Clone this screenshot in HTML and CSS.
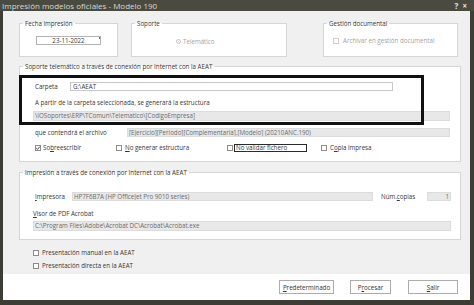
FILE: index.html
```html
<!DOCTYPE html>
<html lang="es">
<head>
<meta charset="utf-8">
<title>Impresión modelos oficiales - Modelo 190</title>
<link rel="stylesheet" href="styles.css">
</head>
<body>
<div class="window">
  <div class="titlebar">
    <span class="title">Impresión modelos oficiales - Modelo 190</span>
    <span class="tb-btns"><span class="tb-help">?</span><span class="tb-close">×</span></span>
  </div>
  <div class="client">
    <div class="main">
      <div class="toprow">
        <fieldset class="grp grp-fecha">
          <legend>Fecha impresión</legend>
          <div class="date-wrap">
            <div class="input date">23-11-2022</div>
            <span class="req"></span>
          </div>
        </fieldset>
        <fieldset class="grp grp-soporte">
          <legend>Soporte</legend>
          <div class="opt opt-radio disabled"><span class="radio"><span class="dot"></span></span>Telemático</div>
        </fieldset>
        <fieldset class="grp grp-gestion">
          <legend>Gestión documental</legend>
          <div class="opt opt-check disabled"><span class="box"></span>Archivar en gestión documental</div>
        </fieldset>
      </div>

      <fieldset class="grp grp-tele">
        <legend>Soporte telemático a través de conexión por Internet con la AEAT</legend>
        <div class="row row-carpeta"><span class="lbl lbl-carpeta">Carpeta</span><div class="input w-carpeta">G:\AEAT</div></div>
        <div class="note">A partir de la carpeta seleccionada, se generará la estructura</div>
        <div class="input ro w-ruta">\IOSoportes\ERP\TComun\Telematico\[CodigoEmpresa]</div>
        <div class="row row-archivo"><span class="lbl lbl-archivo">que contendrá el archivo</span><div class="input ro w-archivo">[Ejercicio][Periodo][Complementaria].[Modelo] (20210ANC.190)</div></div>
        <div class="checks">
          <div class="ck ck1"><span class="box"><svg viewBox="0 0 6 6" width="6" height="6"><path d="M1.2 3.1 L2.5 4.4 L4.9 1.6" fill="none" stroke="#333" stroke-width="0.9"/></svg></span><span>So<u>b</u>reescribir</span></div>
          <div class="ck ck2"><span class="box"></span><span><u>N</u>o generar estructura</span></div>
          <div class="ck ck3"><span class="box"></span><span class="focus">No <u>v</u>alidar fichero</span></div>
          <div class="ck ck4"><span class="box"></span><span>C<u>o</u>pia impresa</span></div>
        </div>
      </fieldset>

      <fieldset class="grp grp-imp">
        <legend>Impresión a través de conexión por Internet con la AEAT</legend>
        <div class="row row-imp"><span class="lbl lbl-imp"><u>I</u>mpresora</span><div class="input ro w-imp">HP7F6B7A (HP OfficeJet Pro 9010 series)</div><span class="lbl lbl-copias">Núm.<u>c</u>opias</span><div class="input ro w-copias">1</div></div>
        <div class="visor-lbl"><u>V</u>isor de PDF Acrobat</div>
        <div class="input ro w-visor">C:\Program Files\Adobe\Acrobat DC\Acrobat\Acrobat.exe</div>
      </fieldset>

      <div class="extra extra1"><span class="box"></span>Presentación manual en la AEAT</div>
      <div class="extra extra2"><span class="box"></span>Presentación directa en la AEAT</div>
    </div>
    <div class="footer">
      <div class="btn btn-pred"><span><u>P</u>redeterminado</span></div>
      <div class="btn btn-proc"><span>P<u>r</u>ocesar</span></div>
      <div class="btn btn-salir"><span><u>S</u>alir</span></div>
    </div>
  </div>
  <div class="annot"></div>
</div>
</body>
</html>
```

FILE: styles.css
```css
* { box-sizing: border-box; }
html, body { margin: 0; padding: 0; }
body {
  width: 474px;
  height: 305px;
  overflow: hidden;
  font-family: "Open Sans", "Noto Sans", sans-serif;
  font-size: 6.2px;
  color: #363636;
  background: #3f3f37;
}
u { text-decoration-thickness: 0.5px; text-underline-offset: 1px; }

.window {
  position: relative;
  width: 474px;
  height: 305px;
  display: flex;
  flex-direction: column;
  background: #3d3d35;
}
.titlebar {
  height: 11px;
  flex: none;
  display: flex;
  align-items: center;
  justify-content: space-between;
  padding: 0 7px 0 2px;
  background: #4a4a41;
  color: #d9d9d1;
}
.title { font-size: 8px; line-height: 11px; }
.tb-btns { display: flex; gap: 4px; font-size: 8px; font-weight: bold; color: #e6e6e6; line-height: 11px; }

.client {
  flex: 1;
  display: flex;
  flex-direction: column;
  margin: 0 4px 5px 3px;
  background: #f0f0f0;
}
.main { flex: 1; padding: 8px 0 0 16px; }

.grp {
  margin: 0;
  padding: 0;
  min-width: 0;
  border: 1px solid #d6d6d6;
  background: #fff;
}
.grp legend {
  margin-left: 3px;
  padding: 0 2px;
  line-height: 9px;
  color: #363636;
}

.toprow { display: flex; height: 38px; }
.grp-fecha { width: 99px; height: 38px; }
.grp-soporte { width: 156px; height: 38px; margin-left: 13px; }
.grp-gestion { width: 135px; height: 38px; margin-left: 36px; }

.input {
  border: 1px solid #c8c8c8;
  background: #fff;
  height: 9px;
  line-height: 7px;
  padding: 0 1px;
  white-space: nowrap;
  overflow: hidden;
  color: #363636;
}
.input.ro { background: #e8e8e8; border-color: #dcdcdc; color: #6b6b6b; }

.date-wrap { position: relative; width: 65px; margin: 8px 0 0 16px; }
.date { text-align: center; border-color: #b4b4b4; }
.req { position: absolute; right: 1px; top: 1px; width: 1px; height: 2px; background: #e23b3b; }

.opt { display: flex; align-items: center; height: 9px; color: #a3a3a3; }
.opt-radio { margin-top: 9px; padding-left: 44px; }
.opt-check { margin-top: 8px; padding-left: 9px; }
.radio {
  width: 5px; height: 5px; border-radius: 50%;
  border: 1px solid #c4c4c4; margin-right: 2px;
  display: flex; align-items: center; justify-content: center;
}
.dot { width: 1.5px; height: 1.5px; border-radius: 50%; background: #c4c4c4; }

.box {
  flex: none;
  width: 6px; height: 6px;
  border: 1px solid #8c8c8c;
  background: #fff;
  margin-right: 3px;
  display: flex;
}
.box svg { display: block; margin: -1px; }
.opt-check .box { border-color: #cfcfcf; margin-right: 4px; }

.grp-tele { width: 442px; height: 100px; margin-top: 5px; }
.row { display: flex; align-items: center; height: 9px; padding-left: 15px; }
.lbl { flex: none; }
.row-carpeta { margin-top: 11px; }
.lbl-carpeta { width: 35px; }
.w-carpeta { width: 323px; padding-left: 2px; }
.note { margin-top: 7px; padding-left: 15px; line-height: 9px; }
.w-ruta { margin: 4px 0 0 13px; width: 417px; height: 10px; line-height: 8px; }
.row-archivo { margin-top: 7px; }
.lbl-archivo { width: 92px; }
.w-archivo { width: 323px; }

.checks { display: flex; align-items: center; height: 9px; margin-top: 6px; padding-left: 15px; }
.ck { display: flex; align-items: center; flex: none; }
.ck1 { width: 81px; }
.ck1 .box { margin-right: 2px; }
.ck2 { width: 111px; }
.ck3 { width: 94px; }
.ck3 .box { margin-right: 1px; }
.focus { border: 1px solid #2a2a2a; width: 73px; height: 8px; line-height: 6px; padding-left: 1px; }

.grp-imp { width: 442px; height: 72px; margin-top: 6px; }
.row-imp { margin-top: 15px; }
.lbl-imp { width: 37px; }
.w-imp { width: 301px; }
.lbl-copias { margin-left: 8px; width: 46px; }
.w-copias { width: 24px; text-align: right; }
.visor-lbl { margin-top: 8px; padding-left: 13px; line-height: 9px; }
.w-visor { margin: 3px 0 0 13px; width: 418px; height: 10px; line-height: 8px; }

.extra { display: flex; align-items: center; height: 9px; padding-left: 14px; }
.extra1 { margin-top: 8px; }
.extra2 { margin-top: 4px; }

.footer {
  height: 26px;
  flex: none;
  background: #fff;
  display: flex;
  justify-content: flex-end;
  align-items: flex-start;
  padding: 6px 12px 0 0;
}
.btn {
  height: 14px;
  border: 1px solid #adadad;
  background: #fdfdfd;
  display: flex;
  align-items: center;
  justify-content: center;
  color: #333;
}
.btn-pred { width: 55px; }
.btn-proc { width: 41px; margin-left: 16px; }
.btn-salir { width: 50px; margin-left: 17px; }

.annot {
  position: absolute;
  left: 19px;
  top: 75px;
  width: 405px;
  height: 50px;
  border: 3px solid #111;
}
```
